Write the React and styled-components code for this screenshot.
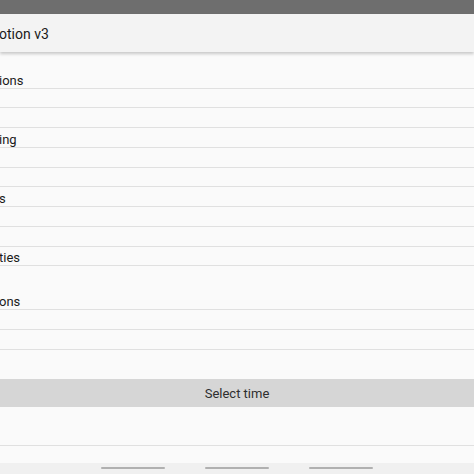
import React from "react";
import styled, { createGlobalStyle } from "styled-components";

const rowList = [
  { id: "r1", label: "ions", height: 20, top: 17 },
  { id: "r2", label: "", height: 19 },
  { id: "r3", label: "", height: 20 },
  { id: "r4", label: "ing", height: 20 },
  { id: "r5", label: "", height: 20 },
  { id: "r6", label: "", height: 19 },
  { id: "r7", label: "s", height: 20 },
  { id: "r8", label: "", height: 20 },
  { id: "r9", label: "", height: 20 },
  { id: "r10", label: "ties", height: 19 },
  { id: "r11", label: "ons", height: 44 },
  { id: "r12", label: "", height: 20 },
  { id: "r13", label: "", height: 20 },
];

const App = () => {
  return (
    <Screen>
      <GlobalStyle />
      <StatusBar />
      <Header>
        <HeaderTitle>otion v3</HeaderTitle>
      </Header>
      <List>
        {rowList.map((eachRow) => (
          <Row key={eachRow.id} $height={eachRow.height} $top={eachRow.top || 0}>
            <RowLabel>{eachRow.label}</RowLabel>
          </Row>
        ))}
      </List>
      <SelectBar>Select time</SelectBar>
      <Row $height={39} $top={0} />
      <Spacer />
      <NavBar>
        <NavPill />
        <NavPill />
        <NavPill />
      </NavBar>
    </Screen>
  );
};

export default App;

const GlobalStyle = createGlobalStyle`
  html, body {
    margin: 0;
    padding: 0;
    background: #fafafa;
  }
  * {
    box-sizing: border-box;
  }
`;

const Screen = styled.div`
  width: 474px;
  height: 474px;
  overflow: hidden;
  display: flex;
  flex-direction: column;
  background: #fafafa;
  font-family: Roboto, "Noto Sans", sans-serif;
  color: #1a1a1a;
`;

const StatusBar = styled.div`
  height: 14px;
  flex-shrink: 0;
  background: #6e6e6e;
`;

const Header = styled.div`
  height: 38px;
  flex-shrink: 0;
  display: flex;
  align-items: center;
  background: #f3f3f3;
  box-shadow: 0 2px 3px rgba(0, 0, 0, 0.2);
  position: relative;
  z-index: 1;
`;

const HeaderTitle = styled.span`
  font-size: 14px;
  margin-left: -1px;
  margin-top: 1px;
  color: #1a1a1a;
`;

const List = styled.div`
  display: flex;
  flex-direction: column;
`;

const Row = styled.div`
  height: ${(p) => p.$height}px;
  margin-top: ${(p) => p.$top}px;
  flex-shrink: 0;
  display: flex;
  align-items: flex-end;
  border-bottom: 1px solid #e0e0e0;
`;

const RowLabel = styled.span`
  font-size: 13px;
  line-height: 19px;
  margin-left: -1px;
  margin-bottom: -2px;
  color: #1a1a1a;
`;

const SelectBar = styled.div`
  margin-top: 29px;
  height: 28px;
  flex-shrink: 0;
  display: flex;
  align-items: center;
  justify-content: center;
  background: #d6d6d6;
  font-size: 13px;
  color: #2e2e2e;
`;

const Spacer = styled.div`
  height: 17px;
  flex-shrink: 0;
`;

const NavBar = styled.div`
  flex: 1;
  display: flex;
  justify-content: center;
  align-items: flex-start;
  gap: 40px;
  padding-top: 4px;
  background: #f0f0f0;
`;

const NavPill = styled.div`
  width: 64px;
  height: 2px;
  border-radius: 1px;
  background: #b0b0b0;
`;
